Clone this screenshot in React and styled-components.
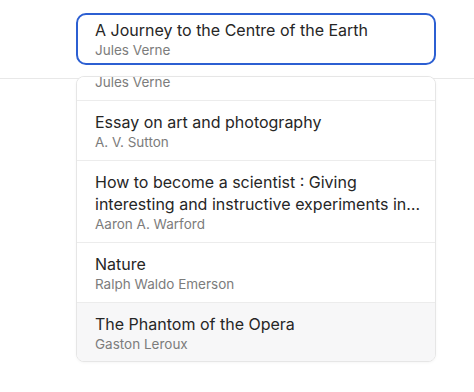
import { useEffect, useRef } from "react";
import styled, { createGlobalStyle } from "styled-components";

const books = [
  { title: "A Journey to the Centre of the Earth", author: "Jules Verne" },
  { title: "Essay on art and photography", author: "A. V. Sutton" },
  {
    title:
      "How to become a scientist : Giving interesting and instructive experiments in physics, chemistry and electricity",
    author: "Aaron A. Warford",
  },
  { title: "Nature", author: "Ralph Waldo Emerson" },
  { title: "The Phantom of the Opera", author: "Gaston Leroux" },
];

export default function App() {
  const listRef = useRef(null);

  useEffect(() => {
    if (listRef.current) listRef.current.scrollTop = 36;
  }, []);

  return (
    <Page>
      <GlobalStyle />
      <Header>
        <Combobox>
          <Selected>
            <Title>{books[0].title}</Title>
            <Author>{books[0].author}</Author>
          </Selected>
          <Dropdown ref={listRef}>
            {books.map((book, i) => (
              <Option key={book.title} $hover={i === books.length - 1}>
                <Title $clamp>{book.title}</Title>
                <Author>{book.author}</Author>
              </Option>
            ))}
          </Dropdown>
        </Combobox>
      </Header>
    </Page>
  );
}

const GlobalStyle = createGlobalStyle`
  html, body {
    margin: 0;
    background: #fff;
    font-family: Inter, "Noto Sans", sans-serif;
  }
`;

const Page = styled.div`
  min-height: 392px;
`;

const Header = styled.div`
  height: 79px;
  border-bottom: 1px solid #e8e8e8;
  padding-left: 76px;
  padding-top: 13px;
  box-sizing: border-box;
`;

const Combobox = styled.div`
  position: relative;
  width: 360px;
`;

const Selected = styled.div`
  border: 2px solid #2c5fd2;
  border-radius: 10px;
  padding: 4px 17px;
  display: flex;
  flex-direction: column;
`;

const Dropdown = styled.div`
  position: absolute;
  top: calc(100% + 11px);
  left: 0;
  right: 0;
  height: 286px;
  box-sizing: border-box;
  overflow: hidden;
  background: #fff;
  border: 1px solid #e6e6e6;
  border-radius: 8px;
  box-shadow: 0 1px 3px rgba(0, 0, 0, 0.04);
  z-index: 2;
`;

const Option = styled.div`
  padding: 10px 12px 9px 18px;
  border-bottom: 1px solid #ececec;
  background: ${(p) => (p.$hover ? "#f7f7f8" : "#fff")};
  display: flex;
  flex-direction: column;
`;

const Title = styled.div`
  font-size: 16px;
  line-height: 22px;
  color: #262626;
  ${(p) =>
    p.$clamp &&
    `
    display: -webkit-box;
    -webkit-line-clamp: 2;
    -webkit-box-orient: vertical;
    overflow: hidden;
  `}
`;

const Author = styled.div`
  font-size: 13.5px;
  line-height: 18px;
  color: #7c7c7c;
`;
